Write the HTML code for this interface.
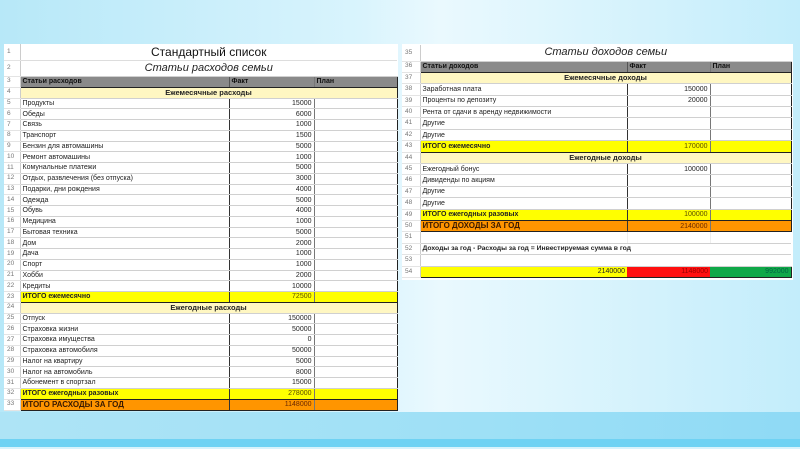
<!DOCTYPE html>
<html><head><meta charset="utf-8"><style>
*{margin:0;padding:0;box-sizing:border-box}
body{width:800px;height:449px;overflow:hidden;position:relative;font-family:"Liberation Sans","DejaVu Sans",sans-serif;
background:linear-gradient(90deg,#b7e8f8 0%,#d9f4fd 45%,#eaf9fe 55%,#c3edfb 100%);}
.band{position:absolute;left:0;width:800px}
.panel{position:absolute;background:#fff}
table{border-collapse:collapse;table-layout:fixed;position:absolute}
td{font-size:7px;line-height:1;padding:0 2px;white-space:nowrap;overflow:hidden;color:#222;border-bottom:1px solid #d0d0d0}
td.n{color:#777;font-size:6.5px;text-align:left;padding-left:3px;border-bottom:1px solid #e4e4e4;border-right:1px solid #ccc}
td.r{text-align:right;border-left:1px solid #333}
td.c{border-left:1px solid #777;border-right:1.5px solid #222}
tr.h td:not(.n){background:#8a8a8a;font-weight:bold;color:#111;border-top:1.5px solid #222;border-bottom:1.5px solid #222}
tr.s td:not(.n){background:#fff7c2;font-weight:bold;text-align:center;font-size:7.5px;border-left:none;border-right:none}
tr.s td.last{border-right:1.5px solid #222!important}
tr.y td:not(.n){background:#ffff00;font-weight:bold;border-top:1px solid #222;border-bottom:1px solid #222}
tr.y td.r{color:#5a4c00;font-weight:normal}
tr.o td:not(.n){background:#ff9500;font-weight:bold;font-size:8px;color:#3a1a00;border-bottom:1.5px solid #222}
tr.o td.r{font-size:7px;font-weight:normal;color:#6a2800}
td.ti{text-align:center;font-size:12px;color:#111;border-bottom:1px solid #ddd}
td.ti2{text-align:center;font-size:11px;font-style:italic;color:#222}
</style></head><body>
<div class="band" style="top:412px;height:27px;background:linear-gradient(90deg,#aee4f6,#9ee0f6 60%,#8fdaf5)"></div>
<div class="band" style="top:439px;height:8px;background:#6fd2f3"></div>
<div class="band" style="top:447px;height:2px;background:#d8f3fc"></div>

<div class="panel" style="left:4px;top:44px;width:394px;height:367px"></div>
<table style="left:4px;top:44px;width:393px">
<colgroup><col style="width:16px"><col style="width:209px"><col style="width:85px"><col style="width:83px"></colgroup>
<tr style="height:16px"><td class="n">1</td><td colspan="3" class="ti">Стандартный список</td></tr>
<tr style="height:16px"><td class="n">2</td><td colspan="3" class="ti2">Статьи расходов семьи</td></tr>
<tr class="h" style="height:11px"><td class="n">3</td><td>Статьи расходов</td><td style="border-left:1px solid #555">Факт</td><td class="c">План</td></tr>
<tr class="s" style="height:11px"><td class="n">4</td><td colspan="3" class="last">Ежемесячные расходы</td></tr>
<tr style="height:10.75px"><td class="n">5</td><td>Продукты</td><td class="r">15000</td><td class="c"></td></tr>
<tr style="height:10.75px"><td class="n">6</td><td>Обеды</td><td class="r">6000</td><td class="c"></td></tr>
<tr style="height:10.75px"><td class="n">7</td><td>Связь</td><td class="r">1000</td><td class="c"></td></tr>
<tr style="height:10.75px"><td class="n">8</td><td>Транспорт</td><td class="r">1500</td><td class="c"></td></tr>
<tr style="height:10.75px"><td class="n">9</td><td>Бензин для автомашины</td><td class="r">5000</td><td class="c"></td></tr>
<tr style="height:10.75px"><td class="n">10</td><td>Ремонт автомашины</td><td class="r">1000</td><td class="c"></td></tr>
<tr style="height:10.75px"><td class="n">11</td><td>Комунальные платежи</td><td class="r">5000</td><td class="c"></td></tr>
<tr style="height:10.75px"><td class="n">12</td><td>Отдых, развлечения (без отпуска)</td><td class="r">3000</td><td class="c"></td></tr>
<tr style="height:10.75px"><td class="n">13</td><td>Подарки, дни рождения</td><td class="r">4000</td><td class="c"></td></tr>
<tr style="height:10.75px"><td class="n">14</td><td>Одежда</td><td class="r">5000</td><td class="c"></td></tr>
<tr style="height:10.75px"><td class="n">15</td><td>Обувь</td><td class="r">4000</td><td class="c"></td></tr>
<tr style="height:10.75px"><td class="n">16</td><td>Медицина</td><td class="r">1000</td><td class="c"></td></tr>
<tr style="height:10.75px"><td class="n">17</td><td>Бытовая техника</td><td class="r">5000</td><td class="c"></td></tr>
<tr style="height:10.75px"><td class="n">18</td><td>Дом</td><td class="r">2000</td><td class="c"></td></tr>
<tr style="height:10.75px"><td class="n">19</td><td>Дача</td><td class="r">1000</td><td class="c"></td></tr>
<tr style="height:10.75px"><td class="n">20</td><td>Спорт</td><td class="r">1000</td><td class="c"></td></tr>
<tr style="height:10.75px"><td class="n">21</td><td>Хобби</td><td class="r">2000</td><td class="c"></td></tr>
<tr style="height:10.75px"><td class="n">22</td><td>Кредиты</td><td class="r">10000</td><td class="c"></td></tr>
<tr class="y" style="height:10.75px"><td class="n">23</td><td>ИТОГО ежемесячно</td><td class="r">72500</td><td class="c"></td></tr>
<tr class="s" style="height:10.75px"><td class="n">24</td><td colspan="3" class="last">Ежегодные расходы</td></tr>
<tr style="height:10.75px"><td class="n">25</td><td>Отпуск</td><td class="r">150000</td><td class="c"></td></tr>
<tr style="height:10.75px"><td class="n">26</td><td>Страховка жизни</td><td class="r">50000</td><td class="c"></td></tr>
<tr style="height:10.75px"><td class="n">27</td><td>Страховка имущества</td><td class="r">0</td><td class="c"></td></tr>
<tr style="height:10.75px"><td class="n">28</td><td>Страховка автомобиля</td><td class="r">50000</td><td class="c"></td></tr>
<tr style="height:10.75px"><td class="n">29</td><td>Налог на квартиру</td><td class="r">5000</td><td class="c"></td></tr>
<tr style="height:10.75px"><td class="n">30</td><td>Налог на автомобиль</td><td class="r">8000</td><td class="c"></td></tr>
<tr style="height:10.75px"><td class="n">31</td><td>Абонемент в спортзал</td><td class="r">15000</td><td class="c"></td></tr>
<tr class="y" style="height:10.75px"><td class="n">32</td><td>ИТОГО ежегодных разовых</td><td class="r">278000</td><td class="c"></td></tr>
<tr class="o" style="height:11px"><td class="n">33</td><td>ИТОГО РАСХОДЫ ЗА ГОД</td><td class="r">1148000</td><td class="c"></td></tr>
</table>

<div class="panel" style="left:402px;top:44px;width:391px;height:236px"></div>
<table style="left:402px;top:45px;width:389px">
<colgroup><col style="width:18px"><col style="width:207px"><col style="width:83px"><col style="width:81px"></colgroup>
<tr style="height:16px"><td class="n">35</td><td colspan="3" class="ti2">Статьи доходов семьи</td></tr>
<tr class="h" style="height:11.4px"><td class="n">36</td><td>Статьи доходов</td><td style="border-left:1px solid #555">Факт</td><td class="c">План</td></tr>
<tr class="s" style="height:11.4px"><td class="n">37</td><td colspan="3" class="last">Ежемесячные доходы</td></tr>
<tr style="height:11.4px"><td class="n">38</td><td>Заработная плата</td><td class="r">150000</td><td class="c"></td></tr>
<tr style="height:11.4px"><td class="n">39</td><td>Проценты по депозиту</td><td class="r">20000</td><td class="c"></td></tr>
<tr style="height:11.4px"><td class="n">40</td><td>Рента от сдачи в аренду недвижимости</td><td class="r"></td><td class="c"></td></tr>
<tr style="height:11.4px"><td class="n">41</td><td>Другие</td><td class="r"></td><td class="c"></td></tr>
<tr style="height:11.4px"><td class="n">42</td><td>Другие</td><td class="r"></td><td class="c"></td></tr>
<tr class="y" style="height:11.4px"><td class="n">43</td><td>ИТОГО ежемесячно</td><td class="r">170000</td><td class="c"></td></tr>
<tr class="s" style="height:11.4px"><td class="n">44</td><td colspan="3" class="last">Ежегодные доходы</td></tr>
<tr style="height:11.4px"><td class="n">45</td><td>Ежегодный бонус</td><td class="r">100000</td><td class="c"></td></tr>
<tr style="height:11.4px"><td class="n">46</td><td>Дивиденды по акциям</td><td class="r"></td><td class="c"></td></tr>
<tr style="height:11.4px"><td class="n">47</td><td>Другие</td><td class="r"></td><td class="c"></td></tr>
<tr style="height:11.4px"><td class="n">48</td><td>Другие</td><td class="r"></td><td class="c"></td></tr>
<tr class="y" style="height:11.4px"><td class="n">49</td><td>ИТОГО ежегодных разовых</td><td class="r">100000</td><td class="c"></td></tr>
<tr class="o" style="height:11.4px"><td class="n">50</td><td>ИТОГО ДОХОДЫ ЗА ГОД</td><td class="r">2140000</td><td class="c"></td></tr>
<tr style="height:11.4px"><td class="n">51</td><td></td><td style="border-left:1px solid #eee"></td><td style="border-left:1px solid #eee"></td></tr>
<tr style="height:11.4px"><td class="n">52</td><td colspan="3" style="font-weight:bold;font-size:6.8px">Доходы за год - Расходы за год = Инвестируемая сумма в год</td></tr>
<tr style="height:11.4px"><td class="n">53</td><td></td><td></td><td></td></tr>
<tr style="height:11.6px"><td class="n">54</td><td colspan="1" style="background:#ffff00;text-align:right;border:1.5px solid #222;border-right:none">2140000</td><td style="background:#ff1010;text-align:right;color:#900;border-top:1.5px solid #222;border-bottom:1.5px solid #222">1148000</td><td style="background:#10a848;text-align:right;color:#064;border:1.5px solid #222;border-left:none">992000</td></tr>
</table>
</body></html>
